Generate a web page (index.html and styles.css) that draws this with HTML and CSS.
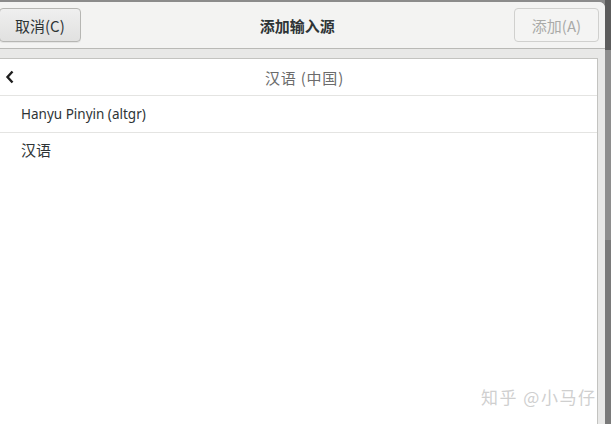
FILE: index.html
```html
<!DOCTYPE html>
<html lang="zh-CN">
<head>
    <meta charset="UTF-8">
    <title>添加输入源</title>
    <link rel="stylesheet" href="styles.css">
</head>
<body>
    <div class="desktop">
        <div class="dialog">
            <div class="headerbar">
                <button class="btn">取消(C)</button>
                <span class="title">添加输入源</span>
                <button class="btn btn-disabled" disabled>添加(A)</button>
            </div>
            <div class="body">
                <div class="frame">
                    <div class="list-head">
                        <svg class="back" width="10" height="14" viewBox="0 0 10 14">
                            <path d="M7.5 1.5 L2.5 7 L7.5 12.5" fill="none" stroke="#1e1e1e" stroke-width="2.4"/>
                        </svg>
                        <span class="list-title">汉语 (中国)</span>
                    </div>
                    <div class="row">Hanyu Pinyin (altgr)</div>
                    <div class="row row-last">汉语</div>
                </div>
            </div>
        </div>
        <div class="side"></div>
    </div>
    <div class="watermark">知乎 @小马仔</div>
</body>
</html>
```

FILE: styles.css
```css
body {
    margin: 0;
    width: 611px;
    height: 424px;
    overflow: hidden;
    background-color: #8b8b8b;
    font-family: "Noto Sans", "Noto Sans CJK SC", sans-serif;
    font-size: 14px;
    color: #2e3436;
}
.desktop {
    display: flex;
    height: 424px;
}
.dialog {
    width: 605px;
    margin-top: 2px;
    background-color: #e8e8e7;
    border-top-right-radius: 6px;
    display: flex;
    flex-direction: column;
    flex-shrink: 0;
}
.side {
    flex-grow: 1;
    background: linear-gradient(#5c5c5c 0, #5c5c5c 50px, #8e8e8e 50px, #8e8e8e 240px, #7a7a7a 240px);
}
.headerbar {
    height: 46px;
    display: flex;
    align-items: center;
    justify-content: space-between;
    padding: 0 6px 0 0;
    background-color: #f3f3f2;
    border-bottom: 1px solid #b9b9b6;
    border-top-right-radius: 6px;
}
.btn {
    height: 34px;
    padding: 0 15px;
    margin-left: -1px;
    font-family: "Noto Sans CJK SC", sans-serif;
    font-size: 15px;
    color: #2e3436;
    background: linear-gradient(#efefef, #e1e1e0);
    border: 1px solid #b6b6b3;
    border-radius: 4px;
    box-shadow: 0 1px 0 rgba(0, 0, 0, 0.06);
}
.btn-disabled {
    width: 85px;
    margin-left: 0;
    color: #a9aaa8;
    background: #f4f4f3;
    border-color: #d0d0ce;
    box-shadow: none;
}
.title {
    font-family: "Noto Sans CJK SC", sans-serif;
    font-weight: bold;
    font-size: 15px;
    color: #2e3436;
}
.body {
    flex-grow: 1;
    padding: 9px 7px 0 0;
    display: flex;
}
.frame {
    flex-grow: 1;
    margin-left: -1px;
    background-color: #ffffff;
    border: 1px solid #c3c3c0;
    border-bottom: none;
}
.list-head {
    height: 36px;
    display: flex;
    align-items: center;
    justify-content: center;
    position: relative;
    border-bottom: 1px solid #e4e4e2;
}
.back {
    position: absolute;
    left: 5px;
    top: 11px;
}
.list-title {
    font-family: "Noto Sans CJK SC", sans-serif;
    font-size: 15px;
    color: #6b6b6b;
    margin-left: 12px;
    letter-spacing: 0.8px;
}
.row {
    height: 36px;
    display: flex;
    align-items: center;
    padding-left: 21px;
    border-bottom: 1px solid #e4e4e2;
    font-size: 13.5px;
}
.row-last {
    border-bottom: none;
    padding-bottom: 3px;
    height: 33px;
    font-family: "Noto Sans CJK SC", sans-serif;
    font-size: 15px;
}
.watermark {
    position: absolute;
    left: 481px;
    top: 384px;
    font-family: "Noto Sans CJK SC", sans-serif;
    font-size: 17px;
    color: #cfcfcf;
    letter-spacing: 1.5px;
}
```
